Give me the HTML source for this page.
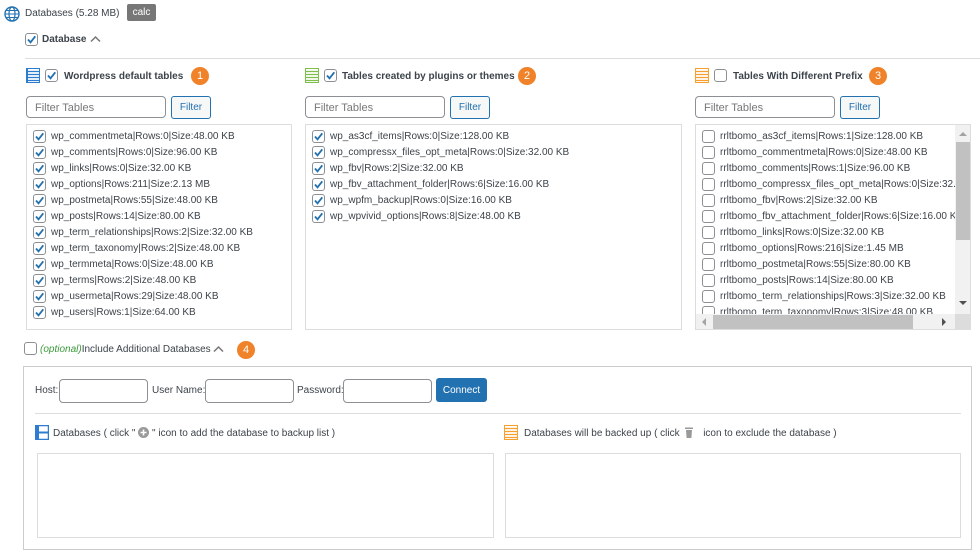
<!DOCTYPE html>
<html><head><meta charset="utf-8"><style>
*{box-sizing:border-box;margin:0;padding:0}
body{width:980px;height:558px;background:#fff;font-family:"Liberation Sans",sans-serif;font-size:10px;color:#3c434a;position:relative;overflow:hidden}
.a{position:absolute}
.cb{position:absolute;width:13px;height:13px;border:1px solid #8c8f94;border-radius:3px;background:#fff}
.cb.on svg{position:absolute;left:-1px;top:-1px}
.t{position:absolute;white-space:nowrap;line-height:12px}
.b{font-weight:bold}
.badge{position:absolute;width:18px;height:18px;border-radius:9px;background:#f0822a;color:#fff;font-size:11px;text-align:center;line-height:18px}
.inp{position:absolute;border:1px solid #8c8f94;border-radius:4px;background:#fff;color:#777;font-size:11px;padding:5px 8px}
.fbtn{position:absolute;border:1px solid #2271b1;border-radius:3px;background:#f6f7f7;color:#2271b1;font-size:10px;text-align:center;line-height:21px}
.list{position:absolute;border:1px solid #ddd;background:#fff;overflow:hidden}
.list .it{position:absolute;left:0;height:16px;white-space:nowrap}
.list .it .cb{left:6px;top:1px}
.list .it span.x{position:absolute;left:24px;top:2px;line-height:11px}
.box{position:absolute;border:1px solid #ccc;background:#fff}
</style></head><body>
<svg class="a" style="left:4px;top:6px" width="16" height="16" viewBox="0 0 16 16"><circle cx="8" cy="8" r="7" fill="none" stroke="#2271b1" stroke-width="1.4"/><ellipse cx="8" cy="8" rx="3" ry="7" fill="none" stroke="#2271b1" stroke-width="1.2"/><path d="M1 8h14M2 4.5h12M2 11.5h12" stroke="#2271b1" stroke-width="1.1"/></svg>
<div class="t" style="left:25px;top:8px;font-size:10px">Databases (5.28 MB)</div>
<div class="a" style="left:127px;top:4px;width:29px;height:17px;background:#777;border-radius:2px;color:#fff;font-size:10px;text-align:center;line-height:17px">calc</div>

<div class="cb on" style="left:25px;top:33px"><svg width="13" height="13" viewBox="0 0 13 13"><path d="M3 6.5l2.5 2.8 4.8-6" fill="none" stroke="#2271b1" stroke-width="1.8"/></svg></div>
<div class="t b" style="left:42px;top:34px">Database</div>
<svg class="a" style="left:90px;top:35px" width="11" height="8"><path d="M1 6.5l4.5-4.5 4.5 4.5" fill="none" stroke="#777" stroke-width="1.5"/></svg>
<div class="a" style="left:25px;top:58px;width:955px;height:1px;background:#ddd"></div>

<svg class="a" style="left:26px;top:68px" width="14" height="15"><rect x="0.5" y="0.5" width="13" height="14" fill="#fff" stroke="#2e7ccf"/><path d="M1 3.5h12M1 6.5h12M1 9.5h12M1 12.5h12" stroke="#2e7ccf" stroke-width="1.3"/><rect x="0" y="0" width="2" height="15" fill="#2e7ccf"/></svg>
<div class="cb on" style="left:45px;top:69px"><svg width="13" height="13" viewBox="0 0 13 13"><path d="M3 6.5l2.5 2.8 4.8-6" fill="none" stroke="#2271b1" stroke-width="1.8"/></svg></div>
<div class="t b" style="left:64px;top:71px">Wordpress default tables</div>
<div class="badge" style="left:191px;top:67px">1</div>

<svg class="a" style="left:305px;top:68px" width="14" height="15"><rect x="0.5" y="0.5" width="13" height="14" fill="#fff" stroke="#7dbf4a"/><path d="M1 3.5h12M1 6.5h12M1 9.5h12M1 12.5h12" stroke="#7dbf4a" stroke-width="1.3"/></svg>
<div class="cb on" style="left:324px;top:69px"><svg width="13" height="13" viewBox="0 0 13 13"><path d="M3 6.5l2.5 2.8 4.8-6" fill="none" stroke="#2271b1" stroke-width="1.8"/></svg></div>
<div class="t b" style="left:342px;top:71px">Tables created by plugins or themes</div>
<div class="badge" style="left:518px;top:67px">2</div>

<svg class="a" style="left:695px;top:68px" width="14" height="15"><rect x="0.5" y="0.5" width="13" height="14" fill="#fff" stroke="#f5a030"/><path d="M1 3.5h12M1 6.5h12M1 9.5h12M1 12.5h12" stroke="#f5a030" stroke-width="1.3"/></svg>
<div class="cb" style="left:714px;top:69px"></div>
<div class="t b" style="left:733px;top:71px">Tables With Different Prefix</div>
<div class="badge" style="left:869px;top:67px">3</div>

<div class="inp" style="left:26px;top:96px;width:140px;height:22px">Filter Tables</div>
<div class="fbtn" style="left:171px;top:96px;width:40px;height:23px">Filter</div>
<div class="inp" style="left:305px;top:96px;width:140px;height:22px">Filter Tables</div>
<div class="fbtn" style="left:450px;top:96px;width:40px;height:23px">Filter</div>
<div class="inp" style="left:695px;top:96px;width:140px;height:22px">Filter Tables</div>
<div class="fbtn" style="left:840px;top:96px;width:40px;height:23px">Filter</div>

<div class="list" style="left:26px;top:124px;width:266px;height:206px">
<div class="it" style="top:4px"><div class="cb on"><svg width="13" height="13"><path d="M3 6.5l2.5 2.8 4.8-6" fill="none" stroke="#2271b1" stroke-width="1.8"/></svg></div><span class="x">wp_commentmeta|Rows:0|Size:48.00 KB</span></div>
<div class="it" style="top:20px"><div class="cb on"><svg width="13" height="13"><path d="M3 6.5l2.5 2.8 4.8-6" fill="none" stroke="#2271b1" stroke-width="1.8"/></svg></div><span class="x">wp_comments|Rows:0|Size:96.00 KB</span></div>
<div class="it" style="top:36px"><div class="cb on"><svg width="13" height="13"><path d="M3 6.5l2.5 2.8 4.8-6" fill="none" stroke="#2271b1" stroke-width="1.8"/></svg></div><span class="x">wp_links|Rows:0|Size:32.00 KB</span></div>
<div class="it" style="top:52px"><div class="cb on"><svg width="13" height="13"><path d="M3 6.5l2.5 2.8 4.8-6" fill="none" stroke="#2271b1" stroke-width="1.8"/></svg></div><span class="x">wp_options|Rows:211|Size:2.13 MB</span></div>
<div class="it" style="top:68px"><div class="cb on"><svg width="13" height="13"><path d="M3 6.5l2.5 2.8 4.8-6" fill="none" stroke="#2271b1" stroke-width="1.8"/></svg></div><span class="x">wp_postmeta|Rows:55|Size:48.00 KB</span></div>
<div class="it" style="top:84px"><div class="cb on"><svg width="13" height="13"><path d="M3 6.5l2.5 2.8 4.8-6" fill="none" stroke="#2271b1" stroke-width="1.8"/></svg></div><span class="x">wp_posts|Rows:14|Size:80.00 KB</span></div>
<div class="it" style="top:100px"><div class="cb on"><svg width="13" height="13"><path d="M3 6.5l2.5 2.8 4.8-6" fill="none" stroke="#2271b1" stroke-width="1.8"/></svg></div><span class="x">wp_term_relationships|Rows:2|Size:32.00 KB</span></div>
<div class="it" style="top:116px"><div class="cb on"><svg width="13" height="13"><path d="M3 6.5l2.5 2.8 4.8-6" fill="none" stroke="#2271b1" stroke-width="1.8"/></svg></div><span class="x">wp_term_taxonomy|Rows:2|Size:48.00 KB</span></div>
<div class="it" style="top:132px"><div class="cb on"><svg width="13" height="13"><path d="M3 6.5l2.5 2.8 4.8-6" fill="none" stroke="#2271b1" stroke-width="1.8"/></svg></div><span class="x">wp_termmeta|Rows:0|Size:48.00 KB</span></div>
<div class="it" style="top:148px"><div class="cb on"><svg width="13" height="13"><path d="M3 6.5l2.5 2.8 4.8-6" fill="none" stroke="#2271b1" stroke-width="1.8"/></svg></div><span class="x">wp_terms|Rows:2|Size:48.00 KB</span></div>
<div class="it" style="top:164px"><div class="cb on"><svg width="13" height="13"><path d="M3 6.5l2.5 2.8 4.8-6" fill="none" stroke="#2271b1" stroke-width="1.8"/></svg></div><span class="x">wp_usermeta|Rows:29|Size:48.00 KB</span></div>
<div class="it" style="top:180px"><div class="cb on"><svg width="13" height="13"><path d="M3 6.5l2.5 2.8 4.8-6" fill="none" stroke="#2271b1" stroke-width="1.8"/></svg></div><span class="x">wp_users|Rows:1|Size:64.00 KB</span></div>
</div>

<div class="list" style="left:305px;top:124px;width:377px;height:206px">
<div class="it" style="top:4px"><div class="cb on"><svg width="13" height="13"><path d="M3 6.5l2.5 2.8 4.8-6" fill="none" stroke="#2271b1" stroke-width="1.8"/></svg></div><span class="x">wp_as3cf_items|Rows:0|Size:128.00 KB</span></div>
<div class="it" style="top:20px"><div class="cb on"><svg width="13" height="13"><path d="M3 6.5l2.5 2.8 4.8-6" fill="none" stroke="#2271b1" stroke-width="1.8"/></svg></div><span class="x">wp_compressx_files_opt_meta|Rows:0|Size:32.00 KB</span></div>
<div class="it" style="top:36px"><div class="cb on"><svg width="13" height="13"><path d="M3 6.5l2.5 2.8 4.8-6" fill="none" stroke="#2271b1" stroke-width="1.8"/></svg></div><span class="x">wp_fbv|Rows:2|Size:32.00 KB</span></div>
<div class="it" style="top:52px"><div class="cb on"><svg width="13" height="13"><path d="M3 6.5l2.5 2.8 4.8-6" fill="none" stroke="#2271b1" stroke-width="1.8"/></svg></div><span class="x">wp_fbv_attachment_folder|Rows:6|Size:16.00 KB</span></div>
<div class="it" style="top:68px"><div class="cb on"><svg width="13" height="13"><path d="M3 6.5l2.5 2.8 4.8-6" fill="none" stroke="#2271b1" stroke-width="1.8"/></svg></div><span class="x">wp_wpfm_backup|Rows:0|Size:16.00 KB</span></div>
<div class="it" style="top:84px"><div class="cb on"><svg width="13" height="13"><path d="M3 6.5l2.5 2.8 4.8-6" fill="none" stroke="#2271b1" stroke-width="1.8"/></svg></div><span class="x">wp_wpvivid_options|Rows:8|Size:48.00 KB</span></div>
</div>

<div class="list" style="left:695px;top:124px;width:276px;height:206px">
<div class="it" style="top:4px"><div class="cb"></div><span class="x">rrltbomo_as3cf_items|Rows:1|Size:128.00 KB</span></div>
<div class="it" style="top:20px"><div class="cb"></div><span class="x">rrltbomo_commentmeta|Rows:0|Size:48.00 KB</span></div>
<div class="it" style="top:36px"><div class="cb"></div><span class="x">rrltbomo_comments|Rows:1|Size:96.00 KB</span></div>
<div class="it" style="top:52px"><div class="cb"></div><span class="x">rrltbomo_compressx_files_opt_meta|Rows:0|Size:32.00 KB</span></div>
<div class="it" style="top:68px"><div class="cb"></div><span class="x">rrltbomo_fbv|Rows:2|Size:32.00 KB</span></div>
<div class="it" style="top:84px"><div class="cb"></div><span class="x">rrltbomo_fbv_attachment_folder|Rows:6|Size:16.00 KB</span></div>
<div class="it" style="top:100px"><div class="cb"></div><span class="x">rrltbomo_links|Rows:0|Size:32.00 KB</span></div>
<div class="it" style="top:116px"><div class="cb"></div><span class="x">rrltbomo_options|Rows:216|Size:1.45 MB</span></div>
<div class="it" style="top:132px"><div class="cb"></div><span class="x">rrltbomo_postmeta|Rows:55|Size:80.00 KB</span></div>
<div class="it" style="top:148px"><div class="cb"></div><span class="x">rrltbomo_posts|Rows:14|Size:80.00 KB</span></div>
<div class="it" style="top:164px"><div class="cb"></div><span class="x">rrltbomo_term_relationships|Rows:3|Size:32.00 KB</span></div>
<div class="it" style="top:180px"><div class="cb"></div><span class="x">rrltbomo_term_taxonomy|Rows:3|Size:48.00 KB</span></div>
<div class="a" style="left:259px;top:0;width:16px;height:189px;background:#f1f1f1"></div>
<div class="a" style="left:260px;top:17px;width:14px;height:98px;background:#c1c1c1"></div>
<svg class="a" style="left:263px;top:6px" width="8" height="5"><path d="M0 5l4-4 4 4z" fill="#a3a3a3"/></svg>
<svg class="a" style="left:263px;top:176px" width="8" height="5"><path d="M0 0l4 4 4-4z" fill="#505050"/></svg>
<div class="a" style="left:0;top:189px;width:276px;height:16px;background:#f1f1f1"></div>
<div class="a" style="left:17px;top:190px;width:200px;height:14px;background:#c1c1c1"></div>
<svg class="a" style="left:5px;top:193px" width="5" height="8"><path d="M5 0l-4 4 4 4z" fill="#a3a3a3"/></svg>
<svg class="a" style="left:246px;top:193px" width="5" height="8"><path d="M0 0l4 4-4 4z" fill="#505050"/></svg>
<div class="a" style="left:259px;top:189px;width:17px;height:16px;background:#dcdcdc"></div>
</div>

<div class="cb" style="left:24px;top:342px"></div>
<div class="t" style="left:40px;top:344px"><i style="color:#3a9a3a">(optional)</i>Include Additional Databases</div>
<svg class="a" style="left:213px;top:345px" width="11" height="8"><path d="M1 6.5l4.5-4.5 4.5 4.5" fill="none" stroke="#777" stroke-width="1.5"/></svg>
<div class="badge" style="left:237px;top:341px">4</div>

<div class="box" style="left:23px;top:366px;width:949px;height:184px"></div>
<div class="t" style="left:35px;top:385px">Host:</div>
<div class="inp" style="left:59px;top:379px;width:89px;height:24px"></div>
<div class="t" style="left:152px;top:385px">User Name:</div>
<div class="inp" style="left:205px;top:379px;width:89px;height:24px"></div>
<div class="t" style="left:297px;top:385px">Password:</div>
<div class="inp" style="left:343px;top:379px;width:89px;height:24px"></div>
<div class="a" style="left:436px;top:378px;width:51px;height:24px;background:#2271b1;border-radius:3px;color:#fff;font-size:10px;text-align:center;line-height:26px">Connect</div>
<div class="a" style="left:35px;top:413px;width:926px;height:1px;background:#ddd"></div>

<svg class="a" style="left:35px;top:425px" width="14" height="15"><rect x="0.5" y="0.5" width="13" height="14" fill="#fff" stroke="#2e7ccf" stroke-width="1.5"/><rect x="0" y="0" width="4" height="15" fill="#2e7ccf"/><path d="M1 7.5h13" stroke="#2e7ccf" stroke-width="2"/></svg>
<div class="t" style="left:53px;top:427px">Databases ( click " <svg width="11" height="11" style="vertical-align:-2px"><circle cx="5.5" cy="5.5" r="5.5" fill="#999"/><path d="M5.5 2.5v6M2.5 5.5h6" stroke="#fff" stroke-width="1.6"/></svg> " icon to add the database to backup list )</div>
<svg class="a" style="left:504px;top:425px" width="14" height="15"><rect x="0.5" y="0.5" width="13" height="14" fill="#fff" stroke="#f5a030"/><path d="M1 3.5h12M1 6.5h12M1 9.5h12M1 12.5h12" stroke="#f5a030" stroke-width="1.3"/></svg>
<div class="t" style="left:524px;top:427px">Databases will be backed up ( click <svg width="10" height="11" style="vertical-align:-2px;margin:0 6px 0 2px"><rect x="1" y="0.5" width="8" height="1.5" fill="#999"/><path d="M2 3h6l-.6 8h-4.8z" fill="#999"/></svg> icon to exclude the database )</div>

<div class="a" style="left:37px;top:453px;width:457px;height:85px;border:1px solid #ddd"></div>
<div class="a" style="left:505px;top:453px;width:456px;height:85px;border:1px solid #ddd"></div>
</body></html>
